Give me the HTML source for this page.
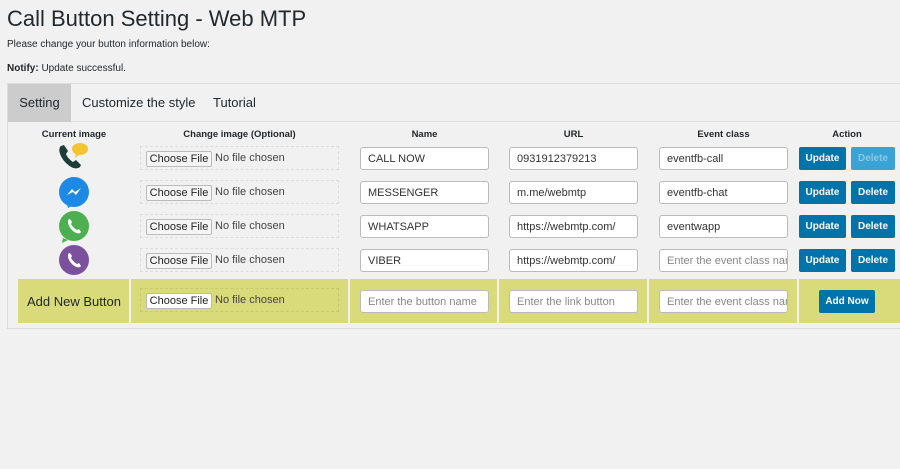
<!DOCTYPE html>
<html><head><style>
*{box-sizing:border-box;margin:0;padding:0}
body{width:900px;height:469px;background:#f1f1f1;font-family:"Liberation Sans",sans-serif;color:#23282d;position:relative;overflow:hidden}
.a{position:absolute}
h1{position:absolute;left:7px;top:6px;font-size:22px;font-weight:normal;color:#23282d}
.s{font-size:10px}
.box{position:absolute;left:7px;top:83px;width:900px;height:246px;border:1px solid #ddd;background:#f1f1f1}
.tabs{position:absolute;left:8px;top:84px;width:900px;height:38px;background:#f1f1f1;border-bottom:1px solid #ddd}
.tab{position:absolute;top:0;height:38px;line-height:38px;font-size:13px;color:#23282d}
.hd{position:absolute;top:129px;font-size:9.5px;font-weight:bold;text-align:center}
.file{position:absolute;left:140px;width:199px;height:24px;border:1px dashed #ddd}
.cf{position:absolute;left:5px;top:4px;height:16px;width:66px;border:1px solid #bbb;background:#f5f5f5;font-size:11px;line-height:15px;text-align:center;color:#222;border-radius:2px}
.nf{position:absolute;left:74px;top:5px;font-size:11px;color:#444}
.in{position:absolute;width:129px;height:23px;border:1px solid #bbb;border-radius:3px;background:#fff;font-size:11px;line-height:22px;padding-left:7px;color:#333;white-space:nowrap;overflow:hidden}
.ph{color:#888}
.btn{position:absolute;height:23px;background:#0073aa;color:#fff;font-size:10px;line-height:23px;text-align:center;border-radius:2px;font-weight:bold}
.ye{position:absolute;top:279px;height:44px;background:#d9db7b}
.ic{position:absolute;left:59px;width:30px;height:30px;border-radius:50%}
</style></head><body>
<h1>Call Button Setting - Web MTP</h1>
<div class="a s" style="left:7px;top:39px">Please change your button information below:</div>
<div class="a s" style="left:7px;top:63px"><b>Notify:</b> Update successful.</div>
<div class="box"></div>
<div class="tabs">
<div class="tab" style="left:0;width:63px;background:#ccc;text-align:center">Setting</div>
<div class="tab" style="left:74px">Customize the style</div>
<div class="tab" style="left:205px">Tutorial</div>
</div>
<div class="hd" style="left:24px;width:100px">Current image</div>
<div class="hd" style="left:140px;width:199px">Change image (Optional)</div>
<div class="hd" style="left:360px;width:129px">Name</div>
<div class="hd" style="left:509px;width:129px">URL</div>
<div class="hd" style="left:659px;width:129px">Event class</div>
<div class="hd" style="left:799px;width:96px">Action</div>

<svg class="a" style="left:57px;top:141px" width="34" height="30" viewBox="0 0 34 30"><path d="M4 5 C1 7 2 14 8 21 C14 27 19 29 23 26 L24 24 L19 19 L16 21 C13 19 10 16 9 13 L11 10 L7 4 Z" fill="#1c3d3a"/><ellipse cx="23" cy="8" rx="8" ry="6" fill="#f4c430"/><path d="M19 12 L18 17 L23 13Z" fill="#f4c430"/></svg>
<div class="ic" style="top:177px;background:#1e88e5"></div>
<svg class="a" style="left:59px;top:177px" width="30" height="32"><path d="M8 27 L9 31 L14 28Z" fill="#1e88e5"/><path d="M8 18 L13 12 L16 15 L22 11 L17 18 L14 15Z" fill="#fff"/></svg>
<div class="ic" style="top:211px;background:#4caf50"></div>
<svg class="a" style="left:59px;top:211px" width="30" height="32"><path d="M4 27 L3 32 L9 29Z" fill="#4caf50"/><path d="M10 8 C8 10 9 15 13 19 C17 23 21 23 22 21 L20 18 L18 19 C16 18 13 15 12 13 L13 11 L11 8Z" fill="#fff"/></svg>
<div class="ic" style="top:245px;background:#7b519d"></div>
<svg class="a" style="left:59px;top:245px" width="30" height="30"><path d="M10 8 C8 10 9 15 13 19 C17 23 21 23 22 21 L20 18 L18 19 C16 18 13 15 12 13 L13 11 L11 8Z" fill="#fff"/></svg>

<div class="file" style="top:146px"><div class="cf">Choose File</div><div class="nf">No file chosen</div></div>
<div class="file" style="top:180px"><div class="cf">Choose File</div><div class="nf">No file chosen</div></div>
<div class="file" style="top:214px"><div class="cf">Choose File</div><div class="nf">No file chosen</div></div>
<div class="file" style="top:248px"><div class="cf">Choose File</div><div class="nf">No file chosen</div></div>

<div class="in" style="left:360px;top:147px">CALL NOW</div>
<div class="in" style="left:509px;top:147px">0931912379213</div>
<div class="in" style="left:659px;top:147px">eventfb-call</div>
<div class="btn" style="left:799px;top:147px;width:47px">Update</div>
<div class="btn" style="left:851px;top:147px;width:44px;background:#38a3d4;color:#8cc8e6">Delete</div>

<div class="in" style="left:360px;top:181px">MESSENGER</div>
<div class="in" style="left:509px;top:181px">m.me/webmtp</div>
<div class="in" style="left:659px;top:181px">eventfb-chat</div>
<div class="btn" style="left:799px;top:181px;width:47px">Update</div>
<div class="btn" style="left:851px;top:181px;width:44px">Delete</div>

<div class="in" style="left:360px;top:215px">WHATSAPP</div>
<div class="in" style="left:509px;top:215px">https://webmtp.com/</div>
<div class="in" style="left:659px;top:215px">eventwapp</div>
<div class="btn" style="left:799px;top:215px;width:47px">Update</div>
<div class="btn" style="left:851px;top:215px;width:44px">Delete</div>

<div class="in" style="left:360px;top:249px">VIBER</div>
<div class="in" style="left:509px;top:249px">https://webmtp.com/</div>
<div class="in ph" style="left:659px;top:249px">Enter the event class nam</div>
<div class="btn" style="left:799px;top:249px;width:47px">Update</div>
<div class="btn" style="left:851px;top:249px;width:44px">Delete</div>

<div class="ye" style="left:18px;width:111px"></div>
<div class="ye" style="left:131px;width:217px"></div>
<div class="ye" style="left:350px;width:147px"></div>
<div class="ye" style="left:499px;width:148px"></div>
<div class="ye" style="left:649px;width:148px"></div>
<div class="ye" style="left:799px;width:101px"></div>
<div class="a" style="left:27px;top:294px;font-size:13px;color:#23282d;font-weight:500">Add New Button</div>
<div class="file" style="top:288px;border-color:#c8ca6c"><div class="cf" style="background:#fff">Choose File</div><div class="nf">No file chosen</div></div>
<div class="in ph" style="left:360px;top:290px">Enter the button name</div>
<div class="in ph" style="left:509px;top:290px">Enter the link button</div>
<div class="in ph" style="left:659px;top:290px">Enter the event class nam</div>
<div class="btn" style="left:819px;top:290px;width:56px">Add Now</div>
</body></html>
